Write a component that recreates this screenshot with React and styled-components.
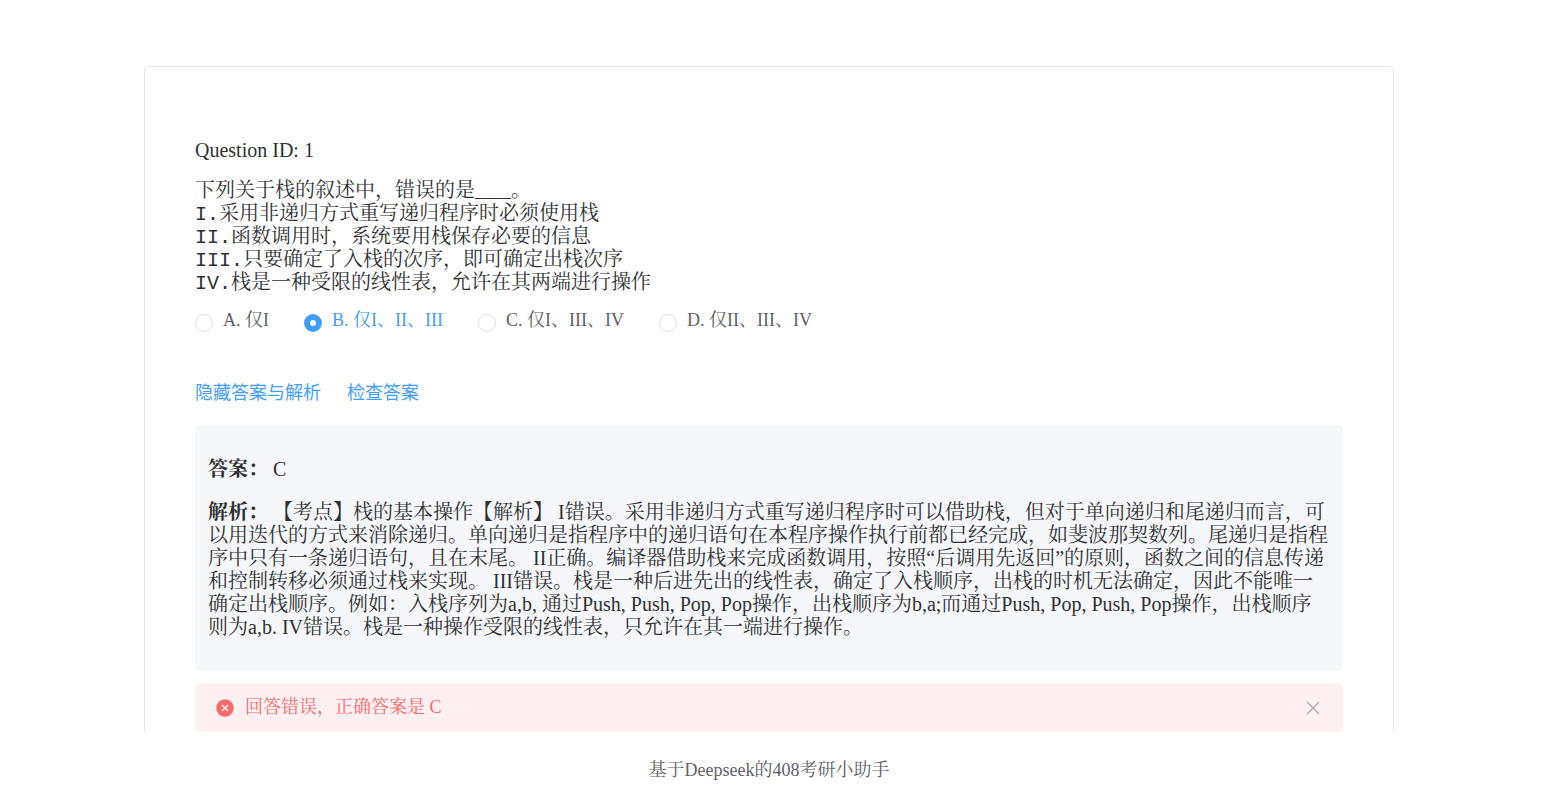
import React, { useState } from "react";
import styled, { createGlobalStyle } from "styled-components";

const GlobalStyle = createGlobalStyle`
  body {
    margin: 0;
    background: #fff;
    font-family: "Liberation Serif", "Noto Serif CJK SC", "Noto Sans CJK SC", serif;
    font-size: 20px;
    line-height: 23px;
    color: #303133;
  }
`;

const Page = styled.div`
  height: 100vh;
  box-sizing: border-box;
  display: flex;
  flex-direction: column;
  padding: 66px 168px 0 144px;
`;

const Main = styled.main`
  flex: 1;
  min-height: 0;
  overflow: hidden;
`;

const Card = styled.section`
  border: 1px solid #e4e7ed;
  border-radius: 5px;
  padding: 72px 50px 50px;
`;

const Title = styled.div`
  margin-bottom: 18px;
`;

const Question = styled.pre`
  margin: 0;
  font-family: "Liberation Mono", "Noto Serif CJK SC", "Noto Sans CJK SC", monospace;
`;

const Options = styled.div`
  display: flex;
  gap: 35px;
  margin-top: 14px;
`;

const Option = styled.label`
  display: flex;
  align-items: center;
  gap: 10px;
  font-size: 18px;
  color: ${props => (props.$checked ? "#409eff" : "#606266")};
  cursor: pointer;
`;

const Radio = styled.input`
  appearance: none;
  box-sizing: border-box;
  width: 18px;
  height: 18px;
  margin: 4px 0 0;
  border: 1px solid #dcdfe6;
  border-radius: 50%;
  background: #fff;

  &:checked {
    border: 6px solid #409eff;
  }
`;

const Actions = styled.div`
  display: flex;
  gap: 26px;
  margin-top: 49px;
`;

const TextButton = styled.button`
  padding: 0;
  border: 0;
  background: none;
  font-family: "Noto Sans CJK SC", sans-serif;
  font-size: 18px;
  font-weight: 400;
  line-height: 20px;
  color: #409eff;
  cursor: pointer;
`;

const Answer = styled.div`
  margin-top: 24px;
  padding: 33px 13px 32px;
  border-radius: 5px;
  background: #f5f7fa;

  p {
    margin: 0 0 20px;
  }
  p:last-child {
    margin: 0;
  }
`;

const Alert = styled.div`
  display: flex;
  align-items: center;
  margin-top: 12px;
  padding: 13px 20px;
  border-radius: 5px;
  background: #fef0f0;
  color: #f56c6c;
  font-size: 18px;
`;

const Message = styled.span`
  flex: 1;
  margin-left: 10px;
`;

const CloseButton = styled.button`
  padding: 0;
  border: 0;
  background: none;
  display: flex;
`;

const Footer = styled.footer`
  padding: 27px 0 15px;
  text-align: center;
  font-size: 18px;
  color: #606266;
`;

const options = ["A. 仅I", "B. 仅I、II、III", "C. 仅I、III、IV", "D. 仅II、III、IV"];

const question = `下列关于栈的叙述中，错误的是___。
I.采用非递归方式重写递归程序时必须使用栈
II.函数调用时，系统要用栈保存必要的信息
III.只要确定了入栈的次序，即可确定出栈次序
IV.栈是一种受限的线性表，允许在其两端进行操作`;

function App() {
  const [selected, setSelected] = useState(1);
  return (
    <Page lang="zh-CN">
      <GlobalStyle />
      <Main>
        <Card>
          <Title>Question ID: 1</Title>
          <Question>{question}</Question>
          <Options>
            {options.map((text, i) => (
              <Option key={text} $checked={selected === i}>
                <Radio type="radio" name="answer" checked={selected === i} onChange={() => setSelected(i)} />
                {text}
              </Option>
            ))}
          </Options>
          <Actions>
            <TextButton>隐藏答案与解析</TextButton>
            <TextButton>检查答案</TextButton>
          </Actions>
          <Answer>
            <p><strong>答案：</strong> C</p>
            <p>
              <strong>解析：</strong> 【考点】栈的基本操作【解析】 I错误。采用非递归方式重写递归程序时可以借助栈，但对于单向递归和尾递归而言，可以用迭代的方式来消除递归。单向递归是指程序中的递归语句在本程序操作执行前都已经完成，如斐波那契数列。尾递归是指程序中只有一条递归语句，且在末尾。 II正确。编译器借助栈来完成函数调用，按照“后调用先返回”的原则，函数之间的信息传递和控制转移必须通过栈来实现。 III错误。栈是一种后进先出的线性表，确定了入栈顺序，出栈的时机无法确定，因此不能唯一确定出栈顺序。例如：入栈序列为a,b, 通过Push, Push, Pop, Pop操作，出栈顺序为b,a;而通过Push, Pop, Push, Pop操作，出栈顺序则为a,b. IV错误。栈是一种操作受限的线性表，只允许在其一端进行操作。
            </p>
          </Answer>
          <Alert role="alert">
            <svg width="20" height="20" viewBox="0 0 1024 1024" fill="currentColor">
              <path d="M512 64a448 448 0 1 1 0 896 448 448 0 0 1 0-896m0 393.700L407.100 353a38.400 38.400 0 1 0-54.300 54.300L457.700 512 353 616.900a38.400 38.400 0 1 0 54.300 54.300L512 566.300l104.900 104.700a38.400 38.400 0 1 0 54.300-54.300L566.300 512l104.700-104.900a38.400 38.400 0 1 0-54.300-54.300z" />
            </svg>
            <Message>回答错误，正确答案是 C</Message>
            <CloseButton aria-label="关闭">
              <svg width="20" height="20" viewBox="0 0 20 20" stroke="#a8abb2" strokeWidth="1.3">
                <path d="M4 4l12 12M16 4L4 16" />
              </svg>
            </CloseButton>
          </Alert>
        </Card>
      </Main>
      <Footer>基于Deepseek的408考研小助手</Footer>
    </Page>
  );
}

export default App;
